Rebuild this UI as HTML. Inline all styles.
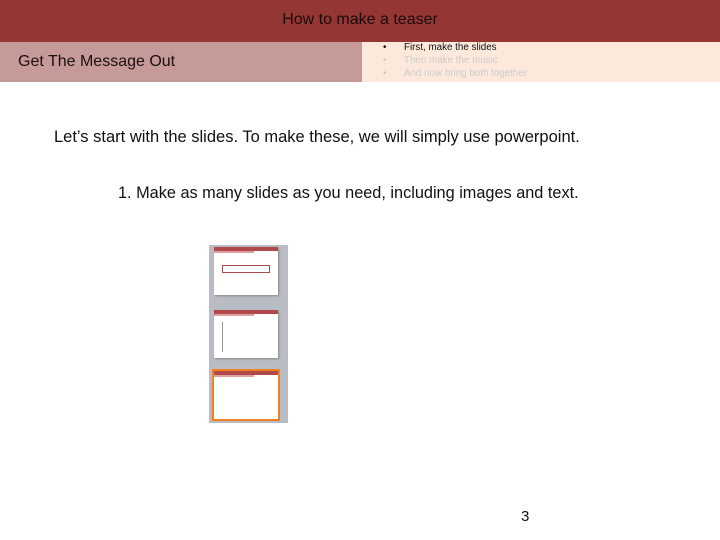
<!DOCTYPE html>
<html><head><style>
body{margin:0;width:720px;height:540px;background:#fff;position:relative;overflow:hidden;font-family:"Liberation Sans",sans-serif}
.a{position:absolute}
.t{white-space:nowrap}
.thumb{position:absolute;left:5px;width:64px;height:48px;background:#fff;box-shadow:1px 1px 2px #888}
.thumb .h{height:4px;background:#b04a4a}
.thumb .s{height:2px;width:40px;background:#e0a0a0}
</style></head><body>
<div class="a" style="left:0;top:0;width:720px;height:42px;background:#943634"></div>
<div class="a t" style="left:0;top:11px;width:720px;text-align:center;font-size:16px;color:#1a0a0a">How to make a teaser</div>
<div class="a" style="left:0;top:42px;width:362px;height:40px;background:#c79a9a"></div>
<div class="a t" style="left:18px;top:53px;font-size:16px;color:#1a1010">Get The Message Out</div>
<div class="a" style="left:362px;top:42px;width:358px;height:40px;background:#fce9dc"></div>
<div class="a t" style="left:383px;top:41px;font-size:9.8px;line-height:13px;color:#111">•<span style="position:absolute;left:21px">First, make the slides</span></div>
<div class="a t" style="left:383px;top:54px;font-size:9.8px;line-height:13px;color:#ccc">•<span style="position:absolute;left:21px">Then make the music</span></div>
<div class="a t" style="left:383px;top:67px;font-size:9.8px;line-height:13px;color:#ccc">•<span style="position:absolute;left:21px">And now bring both together</span></div>
<div class="a t" style="left:54px;top:128px;font-size:16.5px;color:#111">Let’s start with the slides. To make these, we will simply use powerpoint.</div>
<div class="a t" style="left:118px;top:184px;font-size:16.3px;color:#111">1. Make as many slides as you need, including images and text.</div>
<div class="a" style="left:209px;top:245px;width:79px;height:178px;background:#b9bcc4">
  <div class="thumb" style="top:2px"><div class="h"></div><div class="s"></div><div style="margin:12px auto 0;width:46px;height:6px;border:1px solid #b04a4a"></div></div>
  <div class="thumb" style="top:65px"><div class="h"></div><div class="s"></div><div style="margin:6px 0 0 8px;width:1px;height:30px;background:#999"></div></div>
  <div class="a" style="left:3px;top:124px;width:68px;height:52px;background:#f08020"></div>
  <div class="thumb" style="top:126px;box-shadow:none"><div class="h"></div><div class="s"></div></div>
</div>
<div class="a t" style="left:521px;top:508px;font-size:15px;color:#111">3</div>
</body></html>
